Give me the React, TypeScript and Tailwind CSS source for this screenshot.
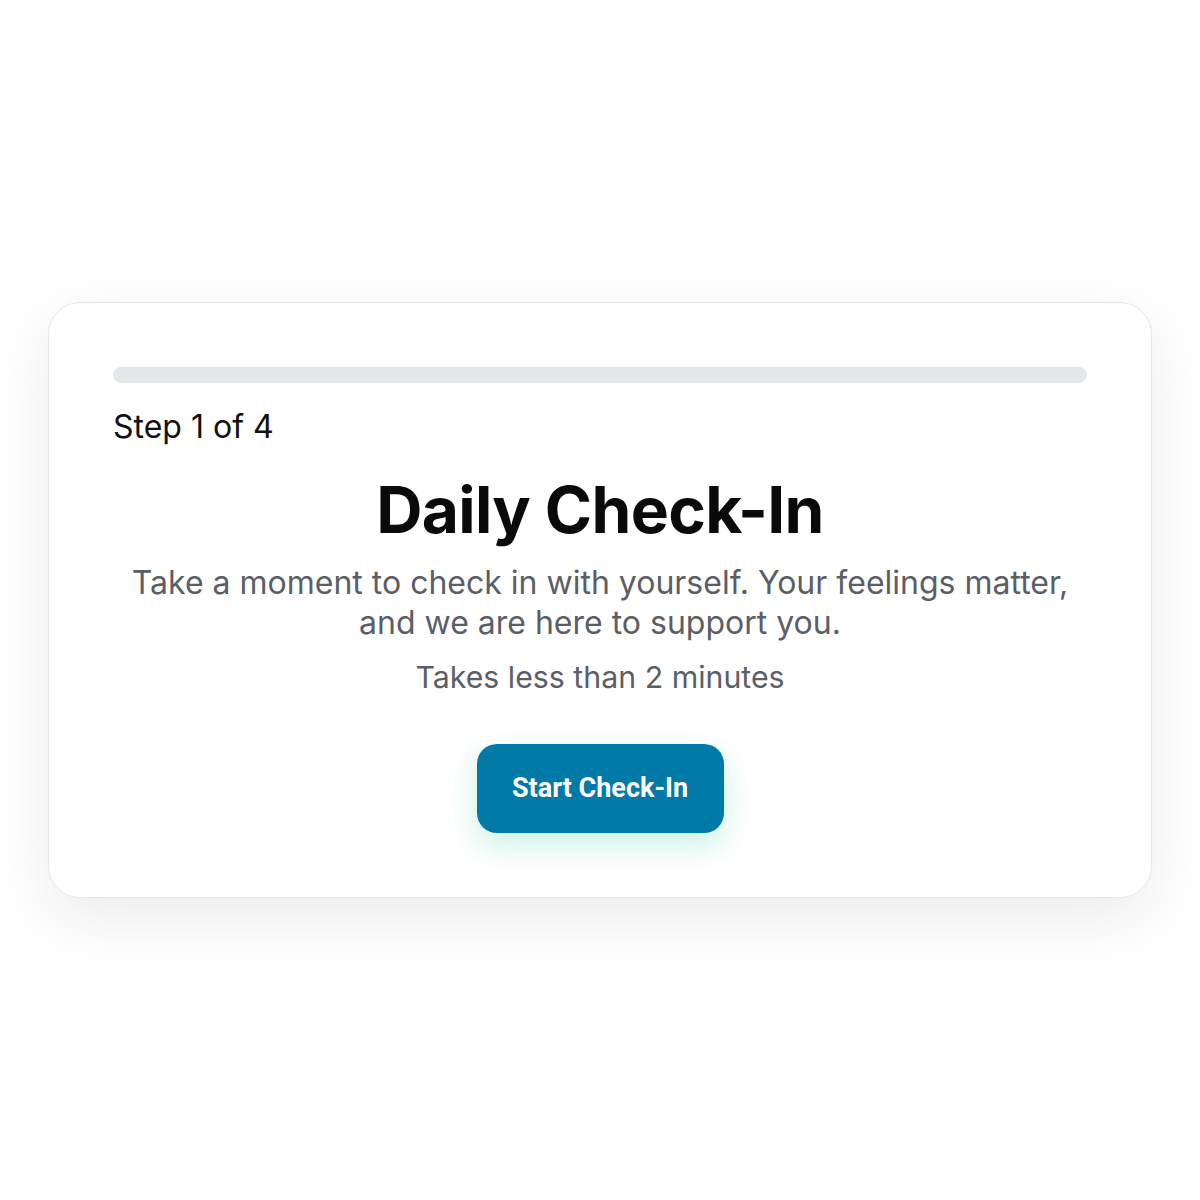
export default function App() {
    return (
        <div className="flex min-h-screen items-center justify-center bg-white px-12" style={{ fontFamily: 'Inter, "Noto Sans", sans-serif' }}>
            {/* Card */}
            <div className="w-full rounded-[32px] border border-gray-200 bg-white p-16 shadow-[0_20px_60px_rgba(0,0,0,0.08)]">
                {/* Progress */}
                <div className="h-4 w-full rounded-full bg-[#e5e7eb]"></div>
                <p className="mt-6 text-[32px] leading-10 text-[#111111]">Step 1 of 4</p>

                <div className="flex flex-col items-center text-center">
                    <h1 className="mt-[27px] text-[64px] font-bold leading-[72px] tracking-[-0.01em] text-[#0a0a0a]">Daily Check-In</h1>
                    <p className="mt-[17px] text-[32px] leading-10 text-[#5b5e66]">
                        Take a moment to check in with yourself. Your feelings matter,
                        <br />
                        and we are here to support you.
                    </p>
                    <p className="mt-3.5 text-[30.3px] leading-10 text-[#5b5e66]">Takes less than 2 minutes</p>

                    <button
                        className="mt-[47px] flex h-[89px] w-[247px] items-center justify-center rounded-[20px] bg-[#017aa8] text-[27px] font-bold text-white shadow-[0_12px_30px_rgba(16,185,129,0.22)]"
                        style={{ fontFamily: 'Roboto, sans-serif' }}
                    >
                        Start Check-In
                    </button>
                </div>
            </div>
        </div>
    );
}
